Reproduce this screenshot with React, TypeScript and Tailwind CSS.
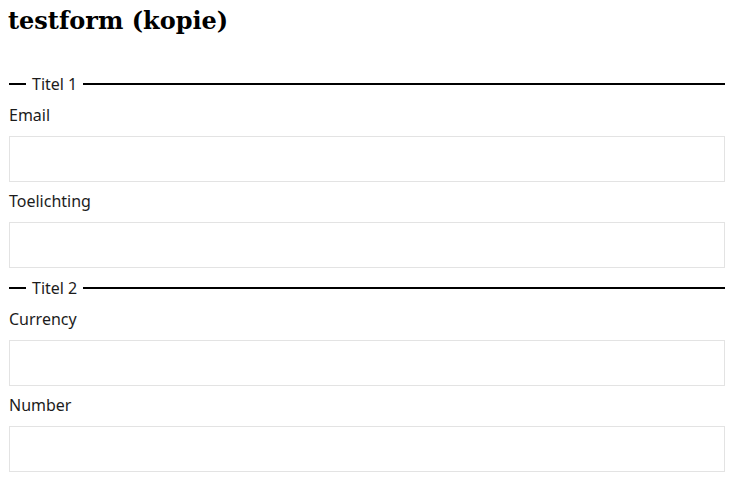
import React from "react";

const sections = [
  { title: "Titel 1", fields: ["Email", "Toelichting"] },
  { title: "Titel 2", fields: ["Currency", "Number"] },
];

function Legend({ title }: { title: string }) {
  return (
    <div className="flex h-6 items-center gap-[6px]">
      <div className="h-[2px] w-[17px] bg-black" />
      <span className="leading-6">{title}</span>
      <div className="h-[2px] flex-1 bg-black" />
    </div>
  );
}

export default function App() {
  return (
    <div className="min-h-[491px] bg-white font-['Noto_Sans',sans-serif] text-base text-[#1c1c1c]">
      <h1 className="pl-2 pt-[5px] font-['DejaVu_Serif',serif] text-2xl font-bold leading-8 text-black">
        testform (kopie)
      </h1>
      <div className="mt-[35px] flex flex-col gap-2 pl-[9px] pr-3">
        {sections.map((s) => (
          <React.Fragment key={s.title}>
            <Legend title={s.title} />
            {s.fields.map((f) => (
              <div key={f} className="flex flex-col gap-2">
                <label className="-mt-px mb-px leading-6">{f}</label>
                <input
                  type="text"
                  className="h-[46px] w-full border border-[#e3e3e3] bg-white px-2 outline-none"
                />
              </div>
            ))}
          </React.Fragment>
        ))}
      </div>
    </div>
  );
}
